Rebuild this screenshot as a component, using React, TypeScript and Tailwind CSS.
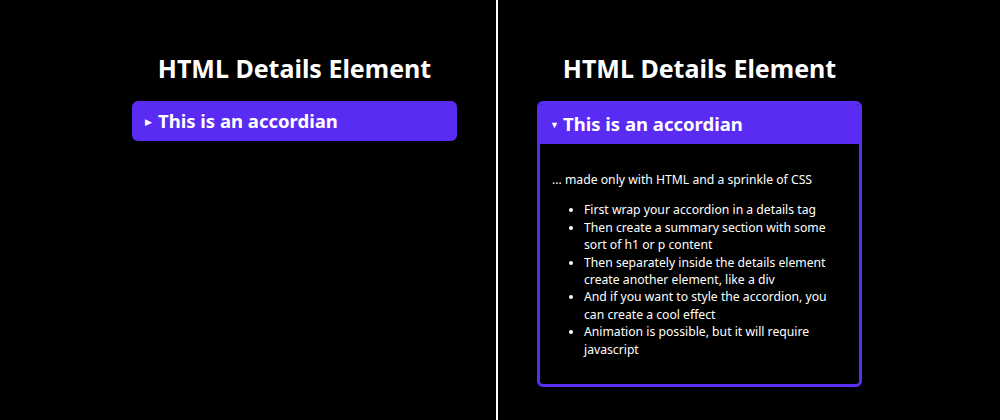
import React from 'react';

const items = [
  'First wrap your accordion in a details tag',
  'Then create a summary section with some sort of h1 or p content',
  'Then separately inside the details element create another element, like a div',
  'And if you want to style the accordion, you can create a cool effect',
  'Animation is possible, but it will require javascript',
];

function Title() {
  return (
    <h1 className="text-center text-[25px] font-bold leading-[32px] text-white">HTML Details Element</h1>
  );
}

function Summary({ open }: { open: boolean }) {
  return (
    <div className="flex items-center h-[40px] px-[13px] gap-[6px] text-white">
      <span className="text-[9px] leading-none w-[7px]">{open ? '▼' : '▶'}</span>
      <span className="text-[18.5px] font-bold leading-none">This is an accordian</span>
    </div>
  );
}

export default function App() {
  return (
    <div className="w-[1000px] h-[420px] bg-black flex overflow-hidden" style={{ fontFamily: '"Noto Sans", "Open Sans", sans-serif' }}>
      <section className="w-[496px] pl-[132px] pt-[52px]">
        <div className="w-[325px]">
          <Title />
          <div className="mt-[17px] rounded-[6px] bg-[#5a2bf2]">
            <Summary open={false} />
          </div>
        </div>
      </section>
      <div className="w-[2px] bg-white" />
      <section className="flex-1 pl-[39px] pt-[52px]">
        <div className="w-[325px]">
          <Title />
          <div className="mt-[17px] rounded-[6px] border-[3px] border-[#5a2ef0] overflow-hidden">
            <div className="bg-[#5a2bf2] -mx-[3px] -mt-[3px] pt-[3px]">
              <Summary open={true} />
            </div>
            <div className="pt-[27px] pb-[26px] pl-[12px] pr-[14px] text-[12.2px] leading-[17.4px] text-white">
              <p>... made only with HTML and a sprinkle of CSS</p>
              <ul className="list-disc mt-[13px] pl-[32px]">
                {items.map((t) => (
                  <li key={t}>{t}</li>
                ))}
              </ul>
            </div>
          </div>
        </div>
      </section>
    </div>
  );
}
